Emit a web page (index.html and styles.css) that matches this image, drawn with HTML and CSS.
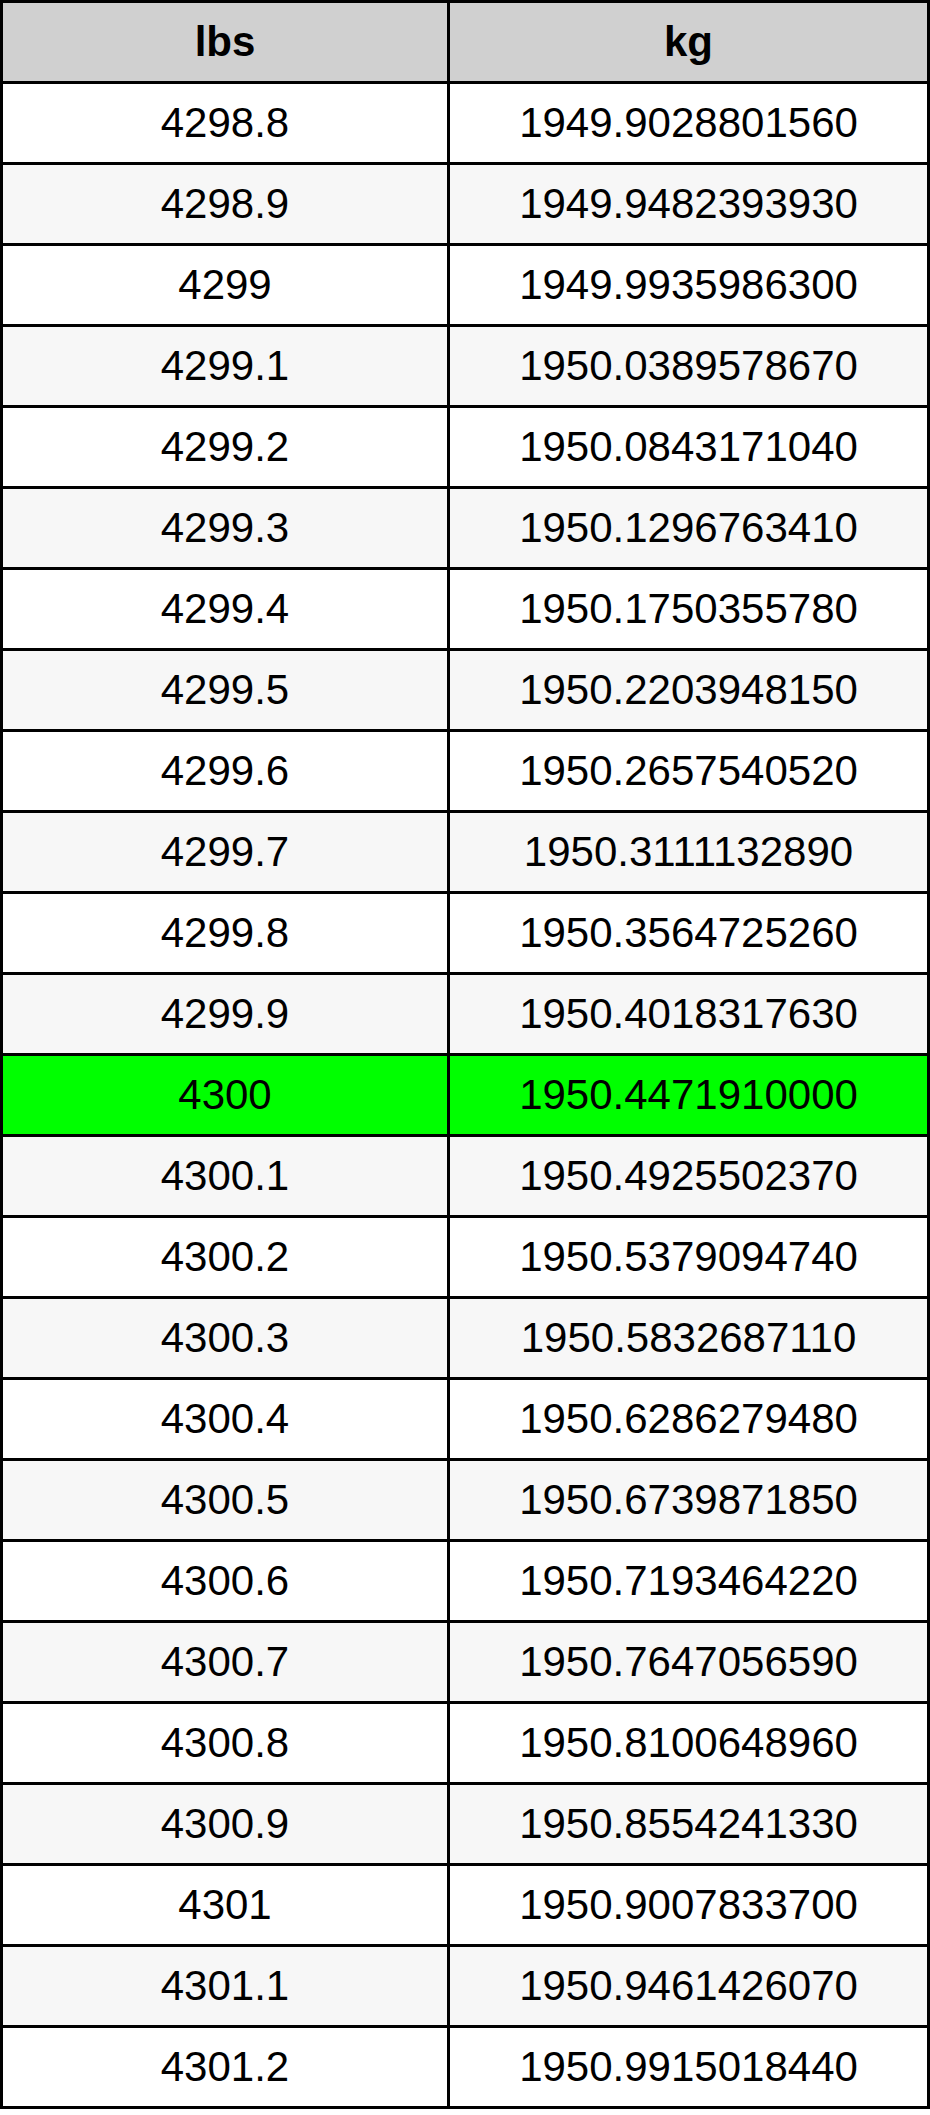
FILE: index.html
```html
<!DOCTYPE html>
<html>
<head>
<meta charset="utf-8">
<link rel="stylesheet" href="styles.css">
</head>
<body>
<table class="conv">
<colgroup><col class="c1"><col class="c2"></colgroup>
<thead>
<tr><th>lbs</th><th>kg</th></tr>
</thead>
<tbody>
<tr><td>4298.8</td><td>1949.9028801560</td></tr>
<tr class="alt"><td>4298.9</td><td>1949.9482393930</td></tr>
<tr><td>4299</td><td>1949.9935986300</td></tr>
<tr class="alt"><td>4299.1</td><td>1950.0389578670</td></tr>
<tr><td>4299.2</td><td>1950.0843171040</td></tr>
<tr class="alt"><td>4299.3</td><td>1950.1296763410</td></tr>
<tr><td>4299.4</td><td>1950.1750355780</td></tr>
<tr class="alt"><td>4299.5</td><td>1950.2203948150</td></tr>
<tr><td>4299.6</td><td>1950.2657540520</td></tr>
<tr class="alt"><td>4299.7</td><td>1950.3111132890</td></tr>
<tr><td>4299.8</td><td>1950.3564725260</td></tr>
<tr class="alt"><td>4299.9</td><td>1950.4018317630</td></tr>
<tr class="hl"><td>4300</td><td>1950.4471910000</td></tr>
<tr class="alt"><td>4300.1</td><td>1950.4925502370</td></tr>
<tr><td>4300.2</td><td>1950.5379094740</td></tr>
<tr class="alt"><td>4300.3</td><td>1950.5832687110</td></tr>
<tr><td>4300.4</td><td>1950.6286279480</td></tr>
<tr class="alt"><td>4300.5</td><td>1950.6739871850</td></tr>
<tr><td>4300.6</td><td>1950.7193464220</td></tr>
<tr class="alt"><td>4300.7</td><td>1950.7647056590</td></tr>
<tr><td>4300.8</td><td>1950.8100648960</td></tr>
<tr class="alt"><td>4300.9</td><td>1950.8554241330</td></tr>
<tr><td>4301</td><td>1950.9007833700</td></tr>
<tr class="alt"><td>4301.1</td><td>1950.9461426070</td></tr>
<tr><td>4301.2</td><td>1950.9915018440</td></tr>
</tbody>
</table>
</body>
</html>
```

FILE: styles.css
```css
html, body {
  margin: 0;
  padding: 0;
  background: #ffffff;
}

.conv {
  width: 930px;
  table-layout: fixed;
  border-collapse: separate;
  border-spacing: 0;
  border-top: 3px solid #000;
  border-left: 3px solid #000;
  font-family: "Liberation Sans", Arial, sans-serif;
  font-size: 42px;
  color: #000;
}

.c1 { width: 447px; }
.c2 { width: 480px; }

.conv th,
.conv td {
  height: 78px;
  padding: 0;
  box-sizing: content-box;
  border-right: 3px solid #000;
  border-bottom: 3px solid #000;
  text-align: center;
  vertical-align: middle;
  line-height: 78px;
  white-space: nowrap;
  overflow: hidden;
}

.conv th {
  background: #d0d0d0;
  font-weight: bold;
}

.conv td {
  background: #ffffff;
  font-weight: normal;
}

.conv tr.alt td {
  background: #f7f7f7;
}

.conv tr.hl td {
  background: #00ff00;
}
```
